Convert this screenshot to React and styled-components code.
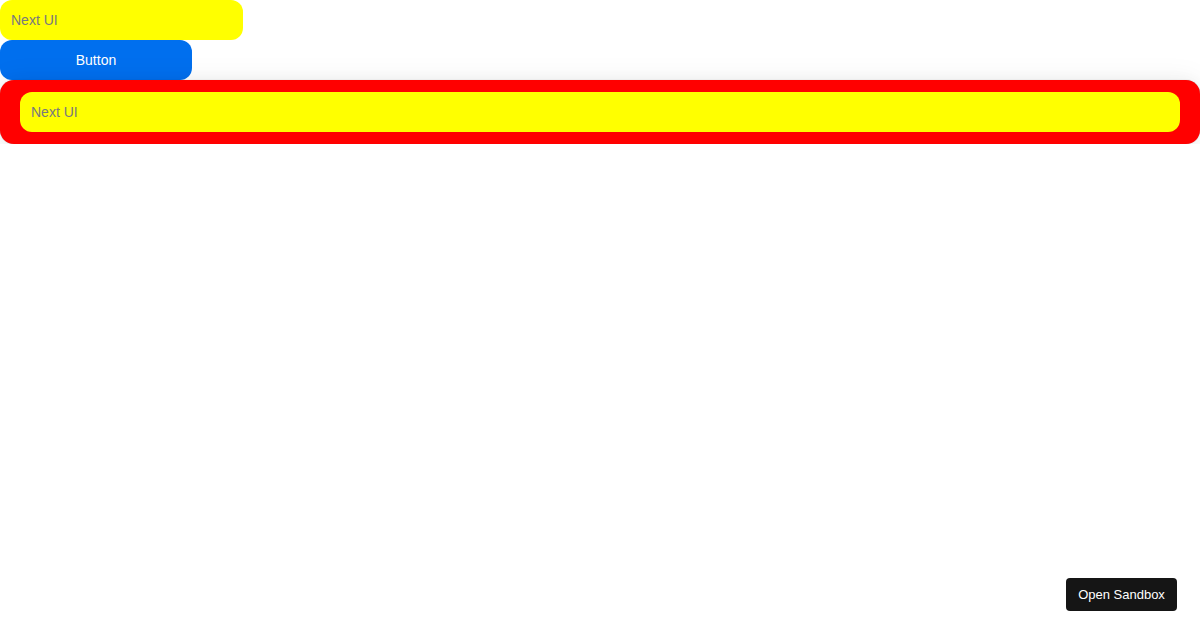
import React from "react";
import styled, { createGlobalStyle } from "styled-components";

const Global = createGlobalStyle`
  html, body { margin: 0; padding: 0; background: #fff; }
  body { font-family: "Liberation Sans", Arial, sans-serif; }
  * { box-sizing: border-box; }
`;

const Page = styled.div`
  display: flex;
  flex-direction: column;
  align-items: flex-start;
`;

const Input = styled.input`
  width: ${(p) => p.$width || "100%"};
  height: 40px;
  border: none;
  outline: none;
  background: #ffff00;
  border-radius: 12px;
  padding: 0 11px;
  font-family: "Liberation Sans", Arial, sans-serif;
  font-size: 14px;
  color: #3f3f46;
  &::placeholder { color: #78787f; }
`;

const Button = styled.button`
  width: 192px;
  height: 40px;
  border: none;
  background: #006fee;
  color: #fff;
  border-radius: 12px;
  font-family: "Liberation Sans", Arial, sans-serif;
  font-size: 14px;
  cursor: pointer;
`;

const Wrapper = styled.div`
  align-self: stretch;
  background: #ff0000;
  border-radius: 14px;
  padding: 12px 20px;
  box-shadow: 0px 0px 15px 0px rgba(0, 0, 0, 0.03),
    0px 2px 30px 0px rgba(0, 0, 0, 0.08), 0px 0px 1px 0px rgba(0, 0, 0, 0.3);
  display: flex;
`;

const Sandbox = styled.button`
  position: fixed;
  right: 23px;
  bottom: 19px;
  height: 33px;
  width: 111px;
  border: none;
  border-radius: 4px;
  background: #151515;
  color: #fff;
  font-family: "Liberation Sans", Arial, sans-serif;
  font-size: 13px;
`;

export default function App() {
  return (
    <>
      <Global />
      <Page>
        <Input $width="243px" placeholder="Next UI" />
        <Button>Button</Button>
        <Wrapper>
          <Input placeholder="Next UI" />
        </Wrapper>
      </Page>
      <Sandbox>Open Sandbox</Sandbox>
    </>
  );
}
